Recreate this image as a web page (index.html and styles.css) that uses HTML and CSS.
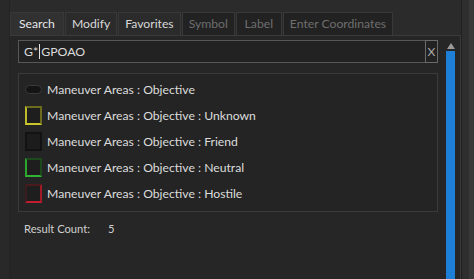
FILE: index.html
```html
<!DOCTYPE html>
<html lang="en">
<head>
    <meta charset="UTF-8">
    <title>Symbol Search</title>
    <link rel="stylesheet" href="styles.css">
</head>
<body>
    <div class="window">
        <div class="gutter"></div>
        <div class="main">
            <div class="tabs">
                <div class="tab active">Search</div>
                <div class="tab">Modify</div>
                <div class="tab">Favorites</div>
                <div class="tab disabled">Symbol</div>
                <div class="tab disabled">Label</div>
                <div class="tab disabled">Enter Coordinates</div>
            </div>
            <div class="panel">
                <div class="content">
                    <div class="search-box">
                        <span class="query">G*<span class="caret"></span>GPOAO</span>
                        <span class="clear">X</span>
                    </div>
                    <ul class="results">
                        <li><span class="icon pill"></span>Maneuver Areas : Objective</li>
                        <li><span class="icon box unknown"></span>Maneuver Areas : Objective : Unknown</li>
                        <li><span class="icon box friend"></span>Maneuver Areas : Objective : Friend</li>
                        <li><span class="icon box neutral"></span>Maneuver Areas : Objective : Neutral</li>
                        <li><span class="icon box hostile"></span>Maneuver Areas : Objective : Hostile</li>
                    </ul>
                    <div class="count">
                        <span>Result Count:</span>
                        <span>5</span>
                    </div>
                </div>
                <div class="scrollbar">
                    <div class="arrow"></div>
                    <div class="thumb"></div>
                </div>
            </div>
        </div>
        <div class="edge"></div>
    </div>
</body>
</html>
```

FILE: styles.css
```css
body {
    margin: 0;
    background-color: #2b2b2b;
    font-family: 'Lato', sans-serif;
    color: #dcdcdc;
}
.window {
    display: flex;
    height: 279px;
    overflow: hidden;
}
.gutter {
    width: 9px;
    background-color: #292929;
    border-right: 1px solid #242424;
}
.main {
    flex: 1;
    display: flex;
    flex-direction: column;
    padding-top: 12px;
}
.tabs {
    display: flex;
    height: 23px;
    gap: 1px;
}
.tab {
    min-width: 46px;
    box-sizing: border-box;
    padding: 0 6px;
    font-size: 12.2px;
    line-height: 22px;
    text-align: center;
    background-color: #2b2b2b;
    color: #d8d8d8;
    border: 1px solid #383838;
    border-bottom: none;
}
.tab.active {
    padding: 0 8px;
    background-color: #313131;
    color: #e8e8e8;
}
.tab.disabled {
    background-color: #222;
    color: #6e6e6e;
}
.panel {
    flex: 1;
    display: flex;
    background-color: #262626;
    border-top: 1px solid #3a3a3a;
    border-right: 1px solid #3a3a3a;
}
.content {
    flex: 1;
    padding: 4px 0 0 8px;
}
.search-box {
    display: flex;
    height: 21px;
    border: 1px solid #575757;
    background-color: #222;
}
.query {
    flex: 1;
    padding-left: 5px;
    font-size: 12.3px;
    line-height: 21px;
}
.caret {
    display: inline-block;
    width: 1px;
    height: 15px;
    margin: 0 1px;
    vertical-align: -3px;
    background-color: #e0e0e0;
}
.clear {
    width: 11px;
    border: 1px solid #6a6a6a;
    margin: -1px;
    font-size: 12px;
    line-height: 21px;
    text-align: center;
    color: #aaa;
}
.results {
    list-style: none;
    margin: 10px 0 0;
    padding: 2px 0 5px;
    border: 1px solid #3a3a3a;
    background-color: #242424;
}
.results li {
    display: flex;
    align-items: center;
    height: 26px;
    padding-left: 6px;
    font-size: 12.2px;
}
.icon {
    width: 17px;
    margin-right: 5px;
    box-sizing: border-box;
}
.pill {
    height: 9px;
    border: 1px solid #3a3a3a;
    border-radius: 5px;
    background-color: #141414;
}
.box {
    height: 19px;
    border: 2px solid;
    background-color: #1e1e1e;
}
.unknown {
    border-color: #6d6b1e #6d6b1e #c9c62a #bdbb2a;
}
.friend {
    border-color: #121212;
    background-color: #1c1c1c;
}
.neutral {
    border-color: #1d4a1d #1d4a1d #2fb52f #2aa62a;
}
.hostile {
    border-color: #4a1a1e #a01a28 #c21c30 #3a1c1e;
}
.count {
    display: flex;
    gap: 18px;
    padding: 10px 0 0 6px;
    font-size: 11.2px;
    color: #cfcfcf;
}
.scrollbar {
    width: 9px;
    margin: 7px 5px 0 8px;
    display: flex;
    flex-direction: column;
    align-items: center;
}
.arrow {
    width: 0;
    height: 0;
    border-left: 4px solid transparent;
    border-right: 4px solid transparent;
    border-bottom: 6px solid #9a9a9a;
    margin-bottom: 2px;
}
.thumb {
    flex: 1;
    width: 9px;
    background-color: #1e7fd6;
}
.edge {
    width: 12px;
    background-color: #2e2e2e;
    border-left: 1px solid #1f1f1f;
    box-shadow: inset -5px 0 0 #383838;
}
```
